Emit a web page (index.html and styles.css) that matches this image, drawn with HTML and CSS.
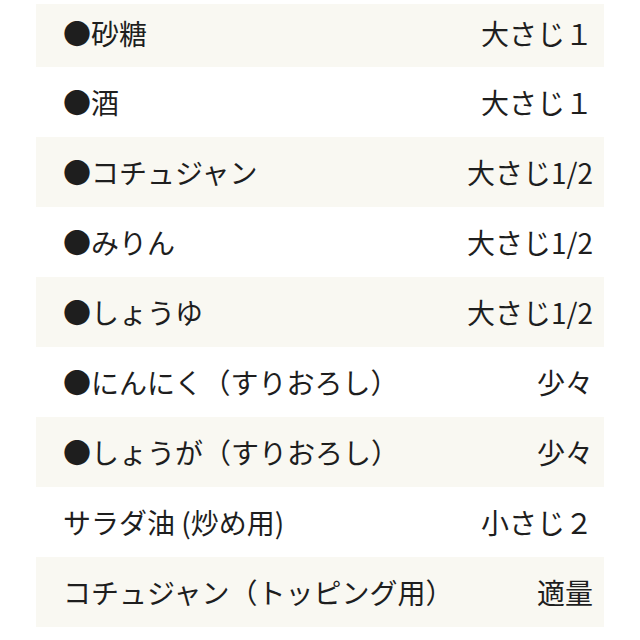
FILE: index.html
```html
<!DOCTYPE html>
<html lang="ja">
<head>
<meta charset="utf-8">
<link rel="stylesheet" href="styles.css">
</head>
<body>
<div class="list">
  <div class="row first"><span class="name">●砂糖</span><span class="qty">大さじ１</span></div>
  <div class="row"><span class="name">●酒</span><span class="qty">大さじ１</span></div>
  <div class="row"><span class="name">●コチュジャン</span><span class="qty">大さじ1/2</span></div>
  <div class="row"><span class="name">●みりん</span><span class="qty">大さじ1/2</span></div>
  <div class="row"><span class="name">●しょうゆ</span><span class="qty">大さじ1/2</span></div>
  <div class="row"><span class="name">●にんにく（すりおろし）</span><span class="qty">少々</span></div>
  <div class="row"><span class="name">●しょうが（すりおろし）</span><span class="qty">少々</span></div>
  <div class="row"><span class="name">サラダ油 (炒め用)</span><span class="qty">小さじ２</span></div>
  <div class="row"><span class="name">コチュジャン（トッピング用）</span><span class="qty">適量</span></div>
</div>
</body>
</html>
```
FILE: styles.css
```css
html, body {
  margin: 0;
  padding: 0;
  background: #ffffff;
}
body {
  padding-top: 4px;
  font-family: "Noto Sans CJK JP", "Noto Sans", sans-serif;
  color: #1e1e1e;
}
.list {
  margin: 0 36px;
  display: flex;
  flex-direction: column;
}
.row {
  height: 70px;
  display: flex;
  align-items: center;
  justify-content: space-between;
  padding: 0 11px 0 27px;
  box-sizing: border-box;
  font-size: 28px;
  line-height: 1;
}
.row:nth-child(odd) {
  background: #f9f8f2;
}
.row.first {
  height: 63px;
  padding-bottom: 6px;
}
.name, .qty {
  white-space: nowrap;
}
```
